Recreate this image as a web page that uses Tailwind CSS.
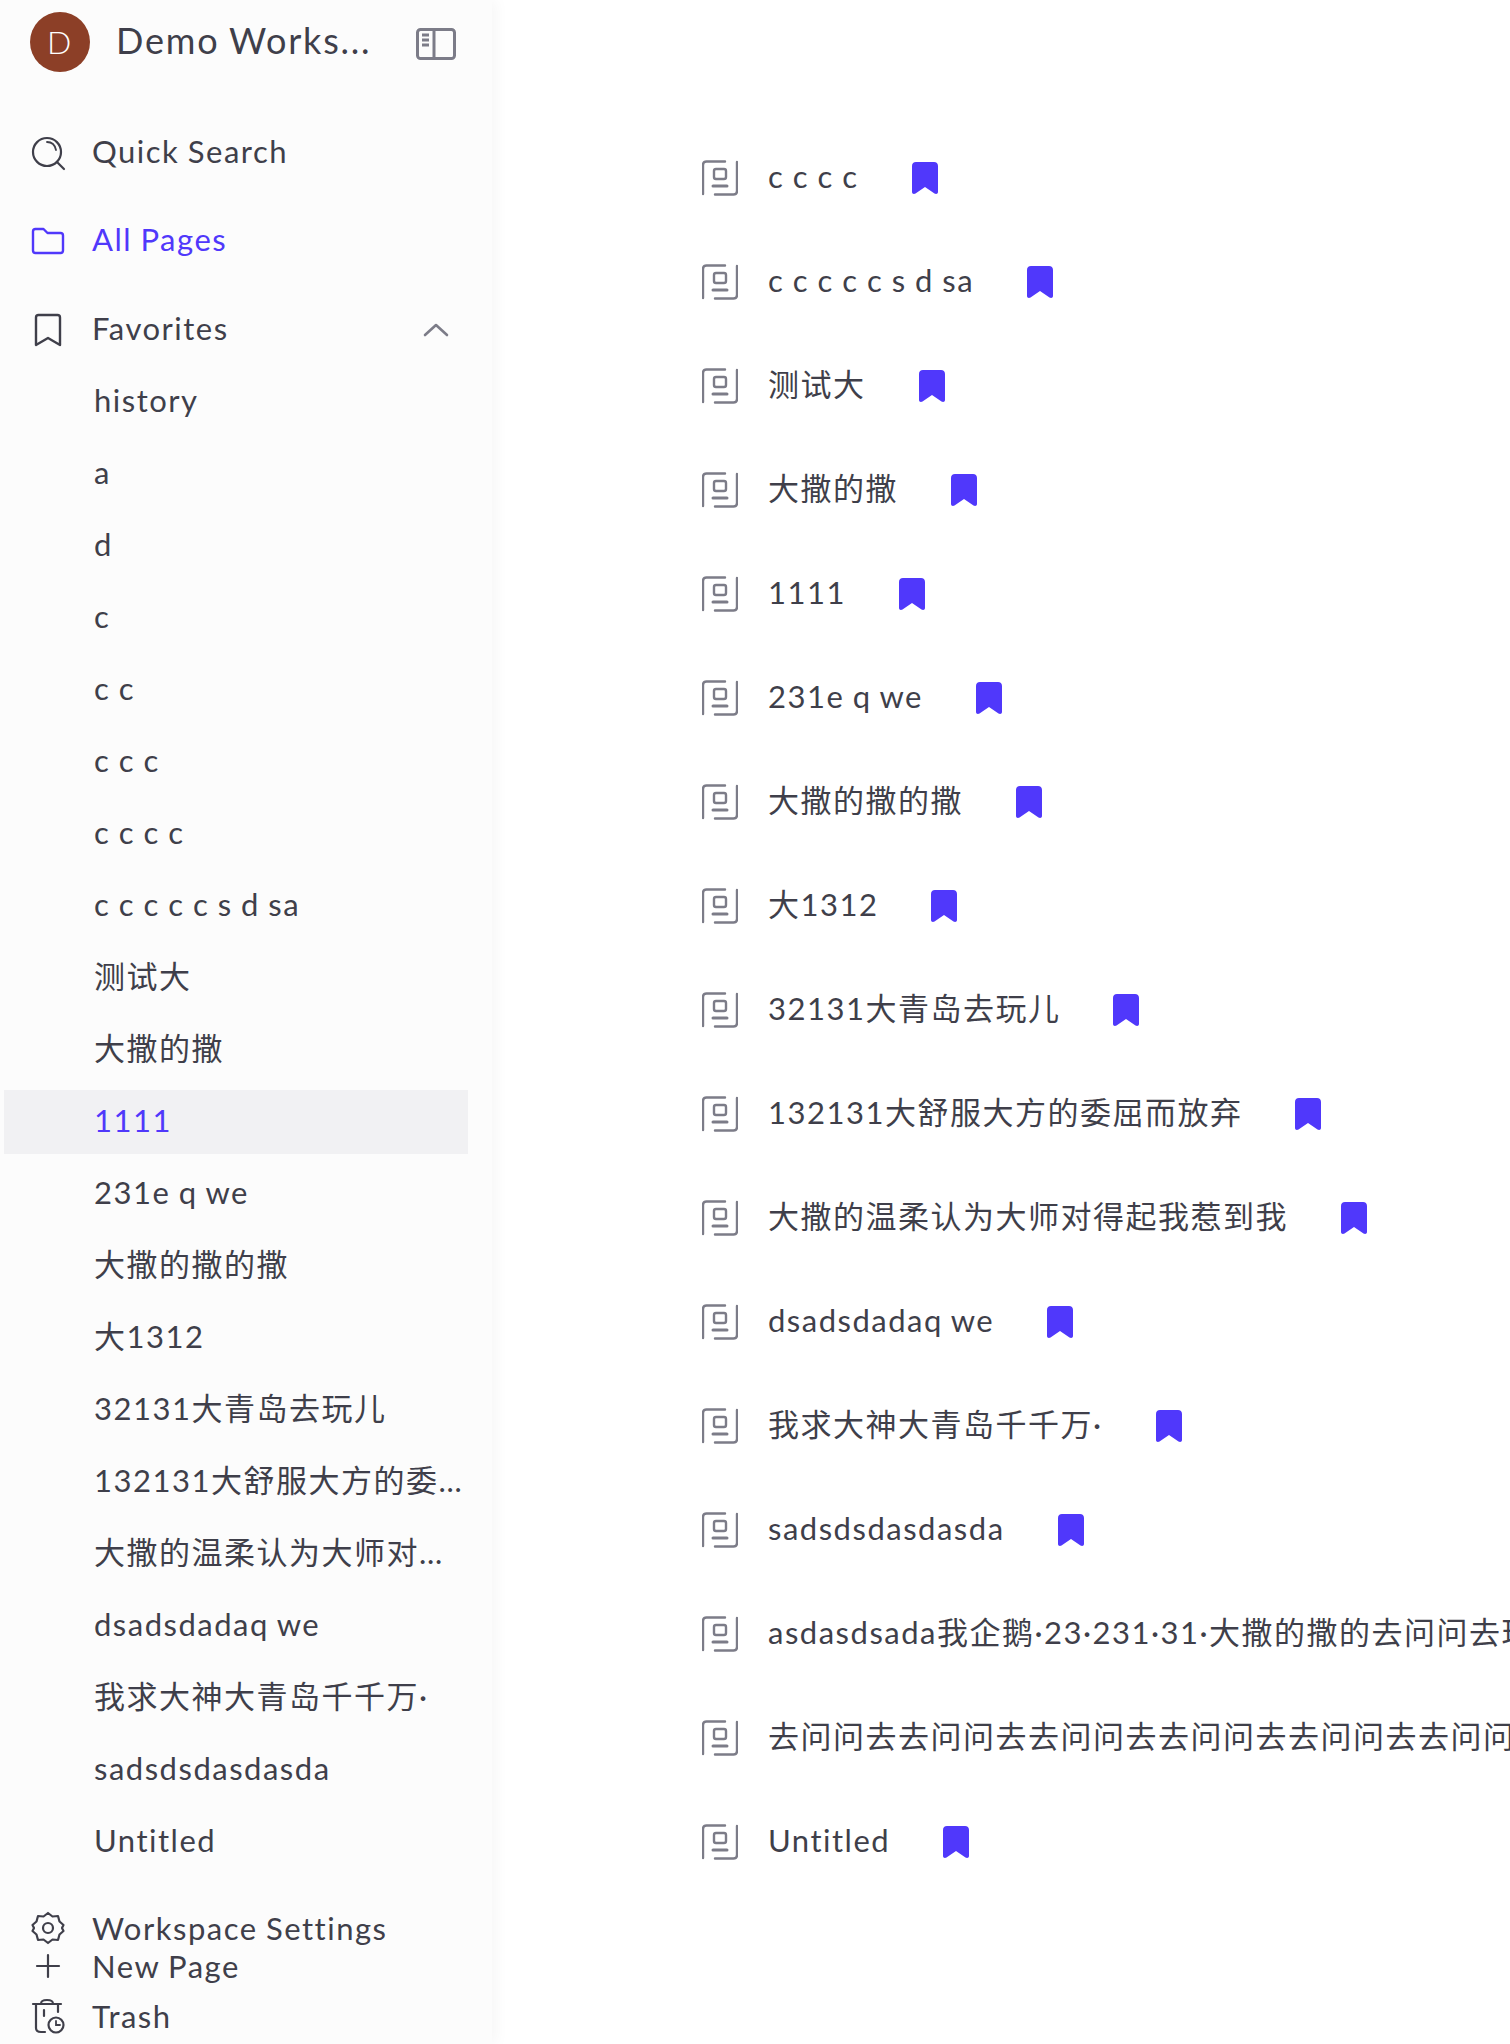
<!DOCTYPE html>
<html lang="en">
<head>
    <meta charset="UTF-8">
    <meta name="viewport" content="width=device-width, initial-scale=1.0">
    <title>All Pages</title>
    <script src="https://cdn.jsdelivr.net/npm/@tailwindcss/browser@4"></script>
</head>
<body class="bg-white text-[#3f3f4a] overflow-hidden font-['Lato','Noto_Sans_CJK_SC',sans-serif]">

<!-- Shared icons -->
<svg class="hidden">
    <symbol id="page" viewBox="0 0 36 36" fill="none" stroke="currentColor" stroke-width="2.4" stroke-linecap="round">
        <path d="M1 34V5c0-2 1.500-3.500 3.500-3.500H23"/>
        <path d="M35 2v29c0 2-1.500 3.500-3.500 3.500H13"/>
        <rect x="12" y="9" width="12" height="10" rx="2"/>
        <path d="M11 26h14" stroke-width="3"/>
    </symbol>
    <symbol id="mark" viewBox="0 0 26 32" fill="#5038fb">
        <path d="M0 4c0-2.500 1.500-4 4-4h18c2.500 0 4 1.500 4 4v26c0 2-2 2.500-3.500 1.500L13 25 3.500 31.500C2 32.500 0 32 0 30z"/>
    </symbol>
</svg>

<div class="flex w-[1510px] h-[2044px] overflow-hidden">

    <!-- Sidebar -->
    <aside class="w-[492px] shrink-0 h-full flex flex-col bg-[#fcfcfc] shadow-[4px_0_14px_rgba(0,0,0,0.04)] text-[31px] tracking-[1.5px] [word-spacing:-1px]">
        <!-- Workspace -->
        <div class="flex items-center h-[84px] pl-[30px]">
            <div class="w-[60px] h-[60px] rounded-full bg-[#8c3f27] text-white text-[32px] font-light flex items-center justify-center">D</div>
            <span class="ml-[26px] w-[300px] pb-[5px] text-[36px] tracking-[1.8px]">Demo Works...</span>
            <svg class="w-[40px] h-[32px] mt-[4px] text-[#7c7c88]" viewBox="0 0 40 32" fill="none" stroke="currentColor" stroke-width="3">
                <rect x="1.5" y="1.5" width="37" height="29" rx="3"/>
                <path d="M18 1.5v29"/>
                <path d="M6 7h7M6 12h7M6 17h7"/>
            </svg>
        </div>

        <nav class="flex flex-col mt-[33px] pl-[30px]">
            <a class="flex items-center h-[72px]">
                <svg class="w-[36px] h-[36px] mr-[26px]" viewBox="0 0 36 36" fill="none" stroke="currentColor" stroke-width="2.2" stroke-linecap="round">
                    <circle cx="17" cy="17" r="14"/>
                    <path d="M27 27l7 7"/>
                    <path d="M17 7c5 0 8 3 9 8" stroke-width="1.8"/>
                </svg>
                <span class="pb-[3px]">Quick Search</span>
            </a>
            <a class="flex items-center h-[72px] mt-[16px] text-[#5038fb]">
                <svg class="w-[36px] h-[36px] mr-[26px]" viewBox="0 0 36 36" fill="none" stroke="currentColor" stroke-width="2.4" stroke-linejoin="round">
                    <path d="M3 8.500c0-1.500 1-2.500 2.500-2.500h8l4 4h13c1.500 0 2.500 1 2.500 2.500v15c0 1.500-1 2.500-2.500 2.500h-25c-1.500 0-2.500-1-2.500-2.500z"/>
                </svg>
                <span class="pb-[3px]">All Pages</span>
            </a>
            <a class="flex items-center h-[72px] mt-[17px]">
                <svg class="w-[36px] h-[36px] mr-[26px]" viewBox="0 0 36 36" fill="none" stroke="currentColor" stroke-width="2.4" stroke-linejoin="round">
                    <path d="M6 5.500c0-1.500 1-2.500 2.500-2.500h19c1.500 0 2.500 1 2.500 2.500v27.500l-12-7-12 7z"/>
                </svg>
                <span class="pb-[3px]">Favorites</span>
                <svg class="w-[26px] h-[14px] ml-auto mr-[43px] text-[#7c7c88]" viewBox="0 0 26 14" fill="none" stroke="currentColor" stroke-width="2.6" stroke-linecap="round" stroke-linejoin="round">
                    <path d="M2 12L13 2l11 10"/>
                </svg>
            </a>
        </nav>

        <!-- Favorites list -->
        <div class="flex flex-col gap-[8px] mt-[4px] ml-[4px] w-[464px]">
            <div class="h-[64px] pl-[90px] flex items-center"><span class="truncate pb-[3px]">history</span></div>
            <div class="h-[64px] pl-[90px] flex items-center"><span class="truncate pb-[3px]">a</span></div>
            <div class="h-[64px] pl-[90px] flex items-center"><span class="truncate pb-[3px]">d</span></div>
            <div class="h-[64px] pl-[90px] flex items-center"><span class="truncate pb-[3px]">c</span></div>
            <div class="h-[64px] pl-[90px] flex items-center"><span class="truncate pb-[3px]">c c</span></div>
            <div class="h-[64px] pl-[90px] flex items-center"><span class="truncate pb-[3px]">c c c</span></div>
            <div class="h-[64px] pl-[90px] flex items-center"><span class="truncate pb-[3px]">c c c c</span></div>
            <div class="h-[64px] pl-[90px] flex items-center"><span class="truncate pb-[3px]">c c c c c s d sa</span></div>
            <div class="h-[64px] pl-[90px] flex items-center"><span class="truncate pb-[3px]">测试大</span></div>
            <div class="h-[64px] pl-[90px] flex items-center"><span class="truncate pb-[3px]">大撒的撒</span></div>
            <div class="h-[64px] pl-[90px] flex items-center bg-[#f1f1f3] text-[#5038fb]"><span class="truncate pb-[3px]">1111</span></div>
            <div class="h-[64px] pl-[90px] flex items-center"><span class="truncate pb-[3px]">231e q we</span></div>
            <div class="h-[64px] pl-[90px] flex items-center"><span class="truncate pb-[3px]">大撒的撒的撒</span></div>
            <div class="h-[64px] pl-[90px] flex items-center"><span class="truncate pb-[3px]">大1312</span></div>
            <div class="h-[64px] pl-[90px] flex items-center"><span class="truncate pb-[3px]">32131大青岛去玩儿</span></div>
            <div class="h-[64px] pl-[90px] flex items-center"><span class="truncate pb-[3px]">132131大舒服大方的委屈而放弃</span></div>
            <div class="h-[64px] pl-[90px] flex items-center"><span class="truncate pb-[3px]">大撒的温柔认为大师对得起我惹到我</span></div>
            <div class="h-[64px] pl-[90px] flex items-center"><span class="truncate pb-[3px]">dsadsdadaq we</span></div>
            <div class="h-[64px] pl-[90px] flex items-center"><span class="truncate pb-[3px]">我求大神大青岛千千万·</span></div>
            <div class="h-[64px] pl-[90px] flex items-center"><span class="truncate pb-[3px]">sadsdsdasdasda</span></div>
            <div class="h-[64px] pl-[90px] flex items-center"><span class="truncate pb-[3px]">Untitled</span></div>
        </div>

        <!-- Footer links -->
        <div class="flex flex-col pl-[30px] mt-[35px]">
            <a class="flex items-center h-[38px]">
                <svg class="w-[36px] h-[36px] mr-[26px]" viewBox="0 0 36 36" fill="none" stroke="currentColor" stroke-width="2.2" stroke-linejoin="round">
                    <path d="M18 3l4.500 3.500 5.500-.5 1.500 5.500 4 3.500-1.500 3 1.500 3-4 3.500-1.500 5.500-5.500-.5-4.500 3.500-4.500-3.500-5.500.5-1.500-5.500-4-3.500 1.500-3-1.500-3 4-3.500 1.500-5.500 5.500.5z"/>
                    <circle cx="18" cy="18" r="5"/>
                </svg>
                <span>Workspace Settings</span>
            </a>
            <a class="flex items-center h-[38px]">
                <svg class="w-[36px] h-[36px] mr-[26px]" viewBox="0 0 36 36" fill="none" stroke="currentColor" stroke-width="2.2" stroke-linecap="round">
                    <path d="M18 7v22M7 18h22"/>
                </svg>
                <span>New Page</span>
            </a>
            <a class="flex items-center h-[38px] mt-[12px]">
                <svg class="w-[36px] h-[36px] mr-[26px]" viewBox="0 0 36 36" fill="none" stroke="currentColor" stroke-width="2.2" stroke-linecap="round">
                    <path d="M3 6h28M11 6c0-3 1.500-4 6-4s6 1 6 4"/>
                    <path d="M6 6v24c0 3 2 4 5 4h4"/>
                    <path d="M28 6v8M14 12v6"/>
                    <circle cx="26" cy="27" r="7.500"/>
                    <path d="M26 23v4h4" stroke-width="1.800"/>
                </svg>
                <span>Trash</span>
            </a>
        </div>
    </aside>

    <!-- Page list -->
    <main class="flex-1 min-w-0 overflow-hidden pt-[146px] pl-[210px] flex flex-col gap-[40px] text-[31px] tracking-[1.5px] [word-spacing:-1px]">
        <div class="flex items-center h-[64px] whitespace-nowrap"><svg class="w-[36px] h-[36px] mr-[30px] shrink-0 text-[#7c7c88]"><use href="#page"/></svg><span class="pb-[3px]">c c c c</span><svg class="w-[26px] h-[32px] ml-[53px] shrink-0"><use href="#mark"/></svg></div>
        <div class="flex items-center h-[64px] whitespace-nowrap"><svg class="w-[36px] h-[36px] mr-[30px] shrink-0 text-[#7c7c88]"><use href="#page"/></svg><span class="pb-[3px]">c c c c c s d sa</span><svg class="w-[26px] h-[32px] ml-[53px] shrink-0"><use href="#mark"/></svg></div>
        <div class="flex items-center h-[64px] whitespace-nowrap"><svg class="w-[36px] h-[36px] mr-[30px] shrink-0 text-[#7c7c88]"><use href="#page"/></svg><span class="pb-[3px]">测试大</span><svg class="w-[26px] h-[32px] ml-[53px] shrink-0"><use href="#mark"/></svg></div>
        <div class="flex items-center h-[64px] whitespace-nowrap"><svg class="w-[36px] h-[36px] mr-[30px] shrink-0 text-[#7c7c88]"><use href="#page"/></svg><span class="pb-[3px]">大撒的撒</span><svg class="w-[26px] h-[32px] ml-[53px] shrink-0"><use href="#mark"/></svg></div>
        <div class="flex items-center h-[64px] whitespace-nowrap"><svg class="w-[36px] h-[36px] mr-[30px] shrink-0 text-[#7c7c88]"><use href="#page"/></svg><span class="pb-[3px]">1111</span><svg class="w-[26px] h-[32px] ml-[53px] shrink-0"><use href="#mark"/></svg></div>
        <div class="flex items-center h-[64px] whitespace-nowrap"><svg class="w-[36px] h-[36px] mr-[30px] shrink-0 text-[#7c7c88]"><use href="#page"/></svg><span class="pb-[3px]">231e q we</span><svg class="w-[26px] h-[32px] ml-[53px] shrink-0"><use href="#mark"/></svg></div>
        <div class="flex items-center h-[64px] whitespace-nowrap"><svg class="w-[36px] h-[36px] mr-[30px] shrink-0 text-[#7c7c88]"><use href="#page"/></svg><span class="pb-[3px]">大撒的撒的撒</span><svg class="w-[26px] h-[32px] ml-[53px] shrink-0"><use href="#mark"/></svg></div>
        <div class="flex items-center h-[64px] whitespace-nowrap"><svg class="w-[36px] h-[36px] mr-[30px] shrink-0 text-[#7c7c88]"><use href="#page"/></svg><span class="pb-[3px]">大1312</span><svg class="w-[26px] h-[32px] ml-[53px] shrink-0"><use href="#mark"/></svg></div>
        <div class="flex items-center h-[64px] whitespace-nowrap"><svg class="w-[36px] h-[36px] mr-[30px] shrink-0 text-[#7c7c88]"><use href="#page"/></svg><span class="pb-[3px]">32131大青岛去玩儿</span><svg class="w-[26px] h-[32px] ml-[53px] shrink-0"><use href="#mark"/></svg></div>
        <div class="flex items-center h-[64px] whitespace-nowrap"><svg class="w-[36px] h-[36px] mr-[30px] shrink-0 text-[#7c7c88]"><use href="#page"/></svg><span class="pb-[3px]">132131大舒服大方的委屈而放弃</span><svg class="w-[26px] h-[32px] ml-[53px] shrink-0"><use href="#mark"/></svg></div>
        <div class="flex items-center h-[64px] whitespace-nowrap"><svg class="w-[36px] h-[36px] mr-[30px] shrink-0 text-[#7c7c88]"><use href="#page"/></svg><span class="pb-[3px]">大撒的温柔认为大师对得起我惹到我</span><svg class="w-[26px] h-[32px] ml-[53px] shrink-0"><use href="#mark"/></svg></div>
        <div class="flex items-center h-[64px] whitespace-nowrap"><svg class="w-[36px] h-[36px] mr-[30px] shrink-0 text-[#7c7c88]"><use href="#page"/></svg><span class="pb-[3px]">dsadsdadaq we</span><svg class="w-[26px] h-[32px] ml-[53px] shrink-0"><use href="#mark"/></svg></div>
        <div class="flex items-center h-[64px] whitespace-nowrap"><svg class="w-[36px] h-[36px] mr-[30px] shrink-0 text-[#7c7c88]"><use href="#page"/></svg><span class="pb-[3px]">我求大神大青岛千千万·</span><svg class="w-[26px] h-[32px] ml-[53px] shrink-0"><use href="#mark"/></svg></div>
        <div class="flex items-center h-[64px] whitespace-nowrap"><svg class="w-[36px] h-[36px] mr-[30px] shrink-0 text-[#7c7c88]"><use href="#page"/></svg><span class="pb-[3px]">sadsdsdasdasda</span><svg class="w-[26px] h-[32px] ml-[53px] shrink-0"><use href="#mark"/></svg></div>
        <div class="flex items-center h-[64px] whitespace-nowrap"><svg class="w-[36px] h-[36px] mr-[30px] shrink-0 text-[#7c7c88]"><use href="#page"/></svg><span class="pb-[3px]">asdasdsada我企鹅·23·231·31·大撒的撒的去问问去玩儿</span></div>
        <div class="flex items-center h-[64px] whitespace-nowrap"><svg class="w-[36px] h-[36px] mr-[30px] shrink-0 text-[#7c7c88]"><use href="#page"/></svg><span class="pb-[3px]">去问问去去问问去去问问去去问问去去问问去去问问去去问问</span></div>
        <div class="flex items-center h-[64px] whitespace-nowrap"><svg class="w-[36px] h-[36px] mr-[30px] shrink-0 text-[#7c7c88]"><use href="#page"/></svg><span class="pb-[3px]">Untitled</span><svg class="w-[26px] h-[32px] ml-[53px] shrink-0"><use href="#mark"/></svg></div>
    </main>
</div>
</body>
</html>
